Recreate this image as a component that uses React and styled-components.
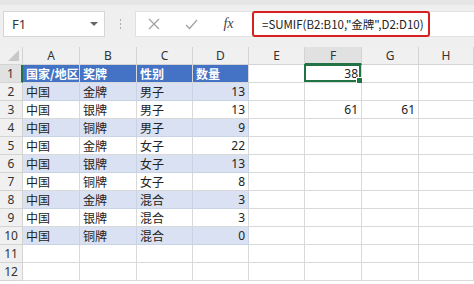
import React from "react";
import styled, { createGlobalStyle } from "styled-components";

const GlobalStyle = createGlobalStyle`
  html, body { margin: 0; padding: 0; background: #ffffff; }
  body {
    font-family: "Noto Sans CJK SC", "Noto Sans", sans-serif;
    width: 474px;
    height: 284px;
    overflow: hidden;
  }
`;

const COLS = ["A", "B", "C", "D", "E", "F", "G", "H"];
const WIDTHS = [23, 57, 57, 56, 56, 56, 57, 57, 55];

const rows = [
  ["中国", "金牌", "男子", 13],
  ["中国", "银牌", "男子", 13],
  ["中国", "铜牌", "男子", 9],
  ["中国", "金牌", "女子", 22],
  ["中国", "银牌", "女子", 13],
  ["中国", "铜牌", "女子", 8],
  ["中国", "金牌", "混合", 3],
  ["中国", "银牌", "混合", 3],
  ["中国", "铜牌", "混合", 0],
];

const extra = { 1: { F: 38 }, 3: { F: 61, G: 61 } };

const TopBar = styled.div`
  height: 47px;
  background: #efefef;
  border-top: 5px solid #e6e6e6;
  box-sizing: border-box;
  display: flex;
  align-items: flex-start;
  padding-top: 6px;
  padding-left: 3px;
`;

const NameBox = styled.div`
  width: 102px;
  height: 26px;
  box-sizing: border-box;
  background: #fff;
  border: 1px solid #d6d6d6;
  display: flex;
  align-items: center;
  justify-content: space-between;
  padding: 0 6px 0 8px;
  font-family: "Noto Sans", sans-serif;
  font-size: 13px;
  color: #333;
`;

const Caret = styled.span`
  width: 0;
  height: 0;
  border-left: 4px solid transparent;
  border-right: 4px solid transparent;
  border-top: 4px solid #666;
`;

const Dots = styled.div`
  width: 30px;
  height: 26px;
  display: flex;
  flex-direction: column;
  align-items: center;
  justify-content: center;
  gap: 2px;
  span {
    width: 1px;
    height: 2px;
    background: #aaa;
  }
`;

const FormulaArea = styled.div`
  flex: 1;
  height: 26px;
  background: #fff;
  border: 1px solid #e0e0e0;
  border-right: none;
  box-sizing: border-box;
  display: flex;
  align-items: center;
`;

const FxButtons = styled.div`
  width: 116px;
  display: flex;
  align-items: center;
  justify-content: space-around;
  color: #9a9a9a;
`;

const Fx = styled.span`
  font-family: "Liberation Serif", serif;
  font-style: italic;
  font-size: 14px;
  color: #444;
  margin-right: 6px;
`;

const Formula = styled.div`
  width: 178px;
  height: 26px;
  box-sizing: border-box;
  border: 2px solid #d61f1f;
  border-radius: 3px;
  display: flex;
  align-items: center;
  padding: 0 0 0 8px;
  font-size: 11.5px;
  color: #222;
  margin-top: -1px;
  white-space: nowrap;
`;

const Sheet = styled.div`
  display: grid;
  grid-template-columns: ${WIDTHS.map((w) => w + "px").join(" ")};
  grid-auto-rows: 18px;
  grid-template-rows: 18px;
`;

const HeadCell = styled.div`
  background: ${(p) => (p.$active ? "#e1e1e1" : "#f0f0f0")};
  border-right: 1px solid #d4d4d4;
  border-bottom: ${(p) => (p.$active ? "2px solid #217346" : "1px solid #d4d4d4")};
  box-sizing: border-box;
  display: flex;
  align-items: center;
  justify-content: center;
  font-family: "Noto Sans", sans-serif;
  font-size: 12px;
  color: #333;
  position: relative;
`;

const Corner = styled.div`
  width: 0;
  height: 0;
  border-left: 11px solid transparent;
  border-bottom: 11px solid #c8c8c8;
  position: absolute;
  right: 3px;
  bottom: 3px;
`;

const RowHead = styled.div`
  background: ${(p) => (p.$active ? "#e1e1e1" : "#f0f0f0")};
  border-right: ${(p) => (p.$active ? "2px solid #217346" : "1px solid #d4d4d4")};
  border-bottom: 1px solid #d4d4d4;
  box-sizing: border-box;
  display: flex;
  align-items: center;
  justify-content: center;
  font-family: "Noto Sans", sans-serif;
  font-size: 12px;
  color: #333;
`;

const Cell = styled.div`
  box-sizing: border-box;
  border-right: 1px solid ${(p) => (p.$band ? "#c9d3e6" : "#d9d9d9")};
  border-bottom: 1px solid ${(p) => (p.$band ? "#c9d3e6" : "#d9d9d9")};
  background: ${(p) => (p.$head ? "#4472c4" : p.$band ? "#d9e1f2" : "#ffffff")};
  color: ${(p) => (p.$head ? "#ffffff" : "#222")};
  font-weight: ${(p) => (p.$head ? 700 : 400)};
  font-size: 12px;
  display: flex;
  align-items: center;
  justify-content: ${(p) => (p.$num ? "flex-end" : "flex-start")};
  padding: 0 3px 0 3px;
  white-space: nowrap;
  overflow: visible;
  position: relative;
  font-family: ${(p) => (p.$num ? '"Noto Sans", sans-serif' : '"Noto Sans CJK SC", sans-serif')};
`;

const Selection = styled.div`
  position: absolute;
  left: -1px;
  top: -1px;
  right: 0;
  bottom: 0;
  border: 2px solid #217346;
  pointer-events: none;
  &::after {
    content: "";
    position: absolute;
    right: -4px;
    bottom: -4px;
    width: 5px;
    height: 5px;
    background: #217346;
    border: 1px solid #fff;
  }
`;

function renderRow(r) {
  const data = r === 1 ? ["国家/地区", "奖牌", "性别", "数量"] : rows[r - 2];
  const cells = [];
  cells.push(
    <RowHead key="h" $active={r === 1}>
      {r}
    </RowHead>
  );
  COLS.forEach((c, i) => {
    let v = "";
    let num = false;
    let inTable = data && i < 4;
    if (inTable) {
      v = data[i];
      num = typeof v === "number";
    } else if (extra[r] && extra[r][c] !== undefined) {
      v = extra[r][c];
      num = true;
    }
    cells.push(
      <Cell
        key={c}
        $head={inTable && r === 1}
        $band={inTable && r > 1 && r % 2 === 0}
        $num={num}
      >
        {v}
        {r === 1 && c === "F" && <Selection />}
      </Cell>
    );
  });
  return cells;
}

export default function App() {
  return (
    <>
      <GlobalStyle />
      <TopBar>
        <NameBox>
          F1
          <Caret />
        </NameBox>
        <Dots>
          <span />
          <span />
          <span />
        </Dots>
        <FormulaArea>
          <FxButtons>
            <svg width="12" height="12" viewBox="0 0 12 12">
              <path d="M1 1L11 11M11 1L1 11" stroke="#a0a0a0" strokeWidth="1.2" />
            </svg>
            <svg width="13" height="11" viewBox="0 0 13 11">
              <path d="M1 6L4.5 9.5L12 1" stroke="#a0a0a0" strokeWidth="1.2" fill="none" />
            </svg>
            <Fx>fx</Fx>
          </FxButtons>
          <Formula>=SUMIF(B2:B10,"金牌",D2:D10)</Formula>
        </FormulaArea>
      </TopBar>
      <Sheet>
        <HeadCell>
          <Corner />
        </HeadCell>
        {COLS.map((c) => (
          <HeadCell key={c} $active={c === "F"}>
            {c}
          </HeadCell>
        ))}
        {Array.from({ length: 12 }, (_, i) => renderRow(i + 1))}
      </Sheet>
    </>
  );
}
